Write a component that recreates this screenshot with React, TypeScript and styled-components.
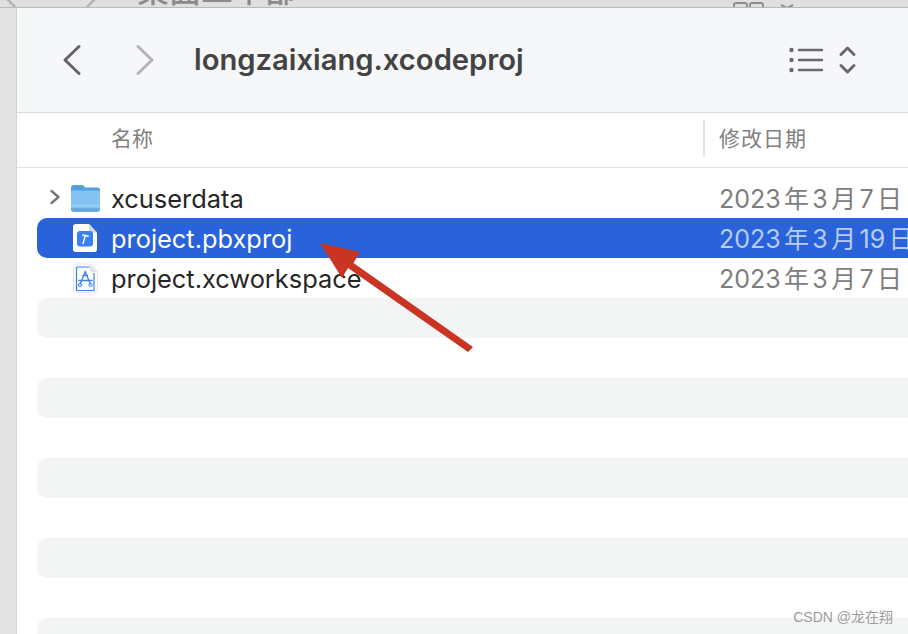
import React from "react";
import styled, { createGlobalStyle } from "styled-components";

const GlobalStyle = createGlobalStyle`
  html, body {
    margin: 0;
    padding: 0;
    width: 908px;
    height: 634px;
    overflow: hidden;
    background: #fff;
    font-family: Inter, "Noto Sans CJK SC", sans-serif;
  }
`;

const SANS = `Inter, "Noto Sans CJK SC", sans-serif`;
const CJK = `"Noto Sans CJK SC", sans-serif`;

const rows = [
  { name: "xcuserdata", date: "2023 年 3 月 7 日", icon: "folder", expandable: true },
  { name: "project.pbxproj", date: "2023 年 3 月 19 日", icon: "pbx", selected: true },
  { name: "project.xcworkspace", date: "2023 年 3 月 7 日", icon: "workspace" },
];

const FolderIcon = () => (
  <svg width="32" height="30" viewBox="0 0 32 30">
    <path d="M1 5C1 3 2 2 4 2h7.500c1.300 0 2 .5 2.800 1.500l.9 1H27c2 0 3 1 3 3v18c0 2-1 3-3 3H4c-2 0-3-1-3-3z" fill="#4fa0dd" />
    <path d="M1 9.500c0-1.200.8-2 2-2h25c1.200 0 2 .8 2 2V26c0 1.700-1 2.800-3 2.800H4c-2 0-3-1.100-3-2.800z" fill="#82c3f1" />
    <path d="M1 22h29v1.200H1z" fill="#a3d4f6" />
    <path d="M1 26c0 1.700 1 2.800 3 2.800h23c2 0 3-1.100 3-2.800v-.7H1z" fill="#61a9df" />
  </svg>
);

const PbxIcon = () => (
  <svg width="30" height="30" viewBox="0 0 30 30">
    <path d="M3 3.500C3 2 4 1 5.500 1H19l8 8.500v17c0 1.500-1 2.500-2.500 2.500h-19C4 29 3 28 3 26.500z" fill="#fff" />
    <path d="M19 1l8 8.500h-6c-1.300 0-2-.7-2-2z" fill="#d2d7e0" />
    <rect x="7" y="8" width="16" height="15.500" rx="3" fill="#3b82ee" />
    <path d="M13 20.500l2.400-8" stroke="#fff" strokeWidth="1.400" fill="none" strokeLinecap="round" />
    <path d="M13 12.200l5 1" stroke="#e6efff" strokeWidth="1.800" fill="none" strokeLinecap="round" />
  </svg>
);

const WorkspaceIcon = () => (
  <svg width="30" height="30" viewBox="0 0 30 30">
    <path d="M3.500 3C3.500 1.800 4.300 1 5.500 1H20l7.500 8v18.500c0 1.200-.8 2-2 2h-20c-1.200 0-2-.8-2-2z" fill="#fdfdfe" stroke="#dcdee2" strokeWidth=".8" />
    <path d="M20 1l7.500 8H22c-1.300 0-2-.7-2-2z" fill="#dfe2e7" />
    <path d="M6.500 4h13M6.500 4v23.500H24V10" fill="none" stroke="#3c82e8" strokeWidth="1.200" />
    <path d="M15.500 8L10 21.500M15 8l5.500 13.500M8.500 17.500h14M12.500 12.500h5.500" fill="none" stroke="#3c82e8" strokeWidth="1.300" />
    <circle cx="10" cy="22" r="1.600" fill="none" stroke="#3c82e8" strokeWidth="1" />
    <circle cx="20.500" cy="22" r="1.600" fill="none" stroke="#3c82e8" strokeWidth="1" />
  </svg>
);

const icons: Record<string, React.ReactNode> = {
  folder: <FolderIcon />,
  pbx: <PbxIcon />,
  workspace: <WorkspaceIcon />,
};

export default function App() {
  return (
    <Page>
      <GlobalStyle />
      <BehindBar>
        <BehindNav width="100" height="7" viewBox="0 0 100 7">
          <path d="M7-1l8 8M95-1l-8 8" />
        </BehindNav>
        <BehindTitle>桌面二本部</BehindTitle>
        <BehindTools width="66" height="7" viewBox="0 0 66 7">
          <path d="M2 7V5c0-1 .7-2 2-2h9c1.300 0 2 1 2 2v2M18 7V5c0-1 .7-2 2-2h9c1.300 0 2 1 2 2v2M49 5l6 3 6-3" />
        </BehindTools>
      </BehindBar>
      <Body>
        <Gutter />
        <Finder>
          <Toolbar>
            <NavIcon width="24" height="32" viewBox="0 0 24 32" $color="#636467">
              <path d="M19 2.500L5 16l14 13.500" />
            </NavIcon>
            <NavIcon width="24" height="32" viewBox="0 0 24 32" $color="#b3b4b6">
              <path d="M5 2.500L19 16 5 29.500" />
            </NavIcon>
            <Title>longzaixiang.xcodeproj</Title>
            <ViewIcon width="70" height="32" viewBox="0 0 70 32">
              <circle cx="3.500" cy="6" r="2.200" fill="#69696c" />
              <circle cx="3.500" cy="16" r="2.200" fill="#69696c" />
              <circle cx="3.500" cy="26" r="2.200" fill="#69696c" />
              <path d="M11 6h23M11 16h23M11 26h23" stroke="#69696c" strokeWidth="2.400" strokeLinecap="round" />
              <path d="M53 10.500l6.500-6.500 6.500 6.500M53 21.500l6.500 6.500 6.500-6.500" stroke="#69696c" strokeWidth="3" fill="none" strokeLinecap="round" strokeLinejoin="round" />
            </ViewIcon>
          </Toolbar>
          <Header>
            <NameHead>名称</NameHead>
            <HeadDivider />
            <DateHead>修改日期</DateHead>
          </Header>
          <List>
            {rows.map((row) => (
              <Row key={row.name} $selected={row.selected}>
                <Disclosure>
                  {row.expandable && (
                    <svg width="12" height="16" viewBox="0 0 12 16">
                      <path d="M2.500 2l7 6-7 6" stroke="#767678" strokeWidth="2.400" fill="none" strokeLinecap="round" strokeLinejoin="round" />
                    </svg>
                  )}
                </Disclosure>
                <IconSlot>{icons[row.icon]}</IconSlot>
                <FileName $selected={row.selected}>{row.name}</FileName>
                <FileDate $selected={row.selected}>{row.date}</FileDate>
              </Row>
            ))}
            {[0, 1, 2, 3, 4, 5, 6, 7, 8].map((i) => (
              <Row key={i} $striped={i % 2 === 0} />
            ))}
          </List>
        </Finder>
      </Body>
      <Arrow width="170" height="120" viewBox="0 0 170 120">
        <path d="M0 3L40 12 33.500 23 153 107 148 112 28 28 22 38z" fill="#c93522" />
      </Arrow>
      <Watermark>CSDN @龙在翔</Watermark>
    </Page>
  );
}

const Page = styled.div`
  position: relative;
  width: 908px;
  height: 634px;
  overflow: hidden;
  display: flex;
  flex-direction: column;
  font-family: ${SANS};
`;

const BehindBar = styled.div`
  height: 7px;
  flex: none;
  display: flex;
  background: #dfdfdf;
  border-bottom: 1px solid #b9b9b9;
  overflow: hidden;
`;

const BehindNav = styled.svg`
  flex: none;
  fill: none;
  stroke: #b4b4b4;
  stroke-width: 2.500;
`;

const BehindTitle = styled.div`
  margin: -31px 0 0 37px;
  font-family: ${CJK};
  font-size: 32px;
  line-height: 38px;
  font-weight: 500;
  color: #8b8b8b;
  white-space: nowrap;
`;

const BehindTools = styled.svg`
  flex: none;
  margin-left: auto;
  margin-right: 110px;
  fill: none;
  stroke: #8f8f8f;
  stroke-width: 2;
`;

const Body = styled.div`
  flex: 1;
  display: flex;
  min-height: 0;
`;

const Gutter = styled.div`
  width: 16px;
  flex: none;
  background: #e3e3e3;
  border-right: 1px solid #d4d4d4;
`;

const Finder = styled.div`
  flex: 1;
  min-width: 0;
  display: flex;
  flex-direction: column;
  background: #fff;
`;

const Toolbar = styled.div`
  height: 104px;
  flex: none;
  display: flex;
  align-items: center;
  padding-left: 43px;
  background: #f6f7f9;
  border-bottom: 1px solid #d9d9d9;
`;

const NavIcon = styled.svg<{ $color: string }>`
  flex: none;
  fill: none;
  stroke: ${(p) => p.$color};
  stroke-width: 3;
  stroke-linecap: round;
  stroke-linejoin: round;
  & + & {
    margin-left: 49px;
  }
`;

const Title = styled.div`
  margin: -2px 0 0 37px;
  font-size: 29.200px;
  font-weight: 600;
  color: #434343;
  white-space: nowrap;
`;

const ViewIcon = styled.svg`
  flex: none;
  margin-left: auto;
  margin-right: 50px;
`;

const Header = styled.div`
  height: 55px;
  flex: none;
  display: flex;
  align-items: center;
  padding: 0 0 3px 94px;
  box-sizing: border-box;
  border-bottom: 1px solid #e2e2e2;
  font-family: ${CJK};
  font-size: 21px;
  color: #808080;
`;

const NameHead = styled.div`
  width: 592px;
  flex: none;
  margin-top: -4px;
`;

const HeadDivider = styled.div`
  width: 2px;
  height: 37px;
  flex: none;
  background: #e2e2e2;
`;

const DateHead = styled.div`
  margin: -4px 0 0 14px;
  letter-spacing: 1px;
  white-space: nowrap;
`;

const List = styled.div`
  display: flex;
  flex-direction: column;
  padding: 10px 0 0 20px;
`;

const Row = styled.div<{ $selected?: boolean; $striped?: boolean }>`
  height: 40px;
  flex: none;
  display: flex;
  align-items: center;
  border-radius: 10px 0 0 10px;
  background: ${(p) => (p.$selected ? "#2962d9" : p.$striped ? "#f3f5f4" : "transparent")};
`;

const Disclosure = styled.div`
  width: 33px;
  flex: none;
  display: flex;
  justify-content: flex-end;
  padding-right: 9px;
  box-sizing: border-box;
  margin-top: -2px;
`;

const IconSlot = styled.div`
  width: 36px;
  height: 30px;
  flex: none;
  margin-right: 5px;
  display: flex;
  align-items: center;
`;

const FileName = styled.div<{ $selected?: boolean }>`
  width: 608px;
  flex: none;
  font-size: 25.400px;
  color: ${(p) => (p.$selected ? "#ffffff" : "#262626")};
  white-space: nowrap;
`;

const FileDate = styled.div<{ $selected?: boolean }>`
  font-size: 25px;
  line-height: 38px;
  margin-top: 2px;
  word-spacing: -3.700px;
  color: ${(p) => (p.$selected ? "#b9cdf4" : "#7d7d7d")};
  white-space: nowrap;
`;

const Arrow = styled.svg`
  position: absolute;
  left: 320px;
  top: 240px;
`;

const Watermark = styled.div`
  position: absolute;
  right: 15px;
  bottom: 8px;
  font-family: "Liberation Sans", ${CJK};
  font-size: 14px;
  color: #9c9c9c;
`;
